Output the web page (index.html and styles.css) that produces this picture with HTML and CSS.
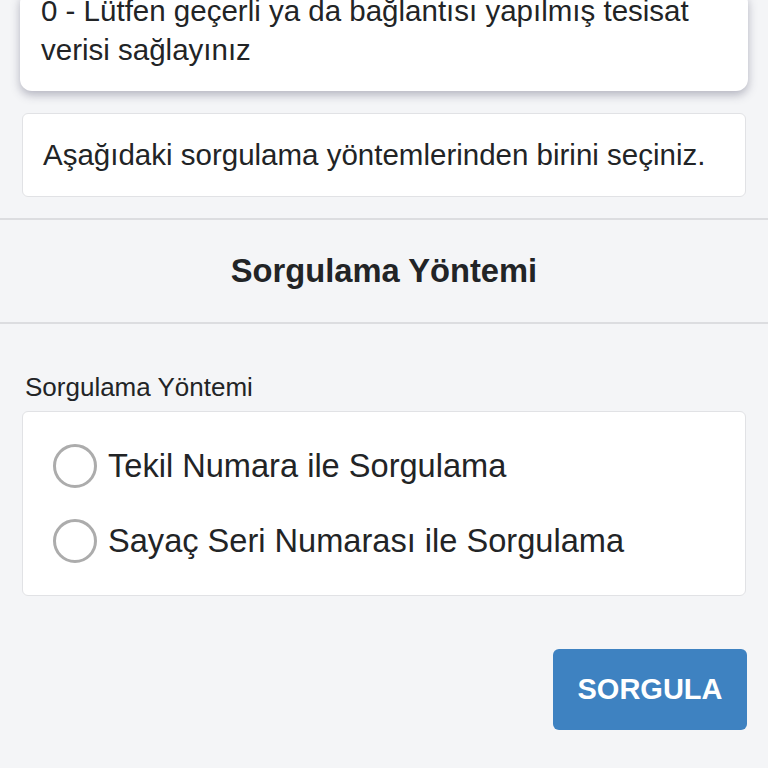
FILE: index.html
```html
<!DOCTYPE html>
<html lang="tr">
<head>
<meta charset="utf-8">
<link rel="stylesheet" href="styles.css">
</head>
<body>
<div class="page">
  <div class="alert-card">
    <p class="alert-text">0 - Lütfen geçerli ya da bağlantısı yapılmış tesisat verisi sağlayınız</p>
  </div>
  <div class="info-card">
    <p class="info-text">Aşağıdaki sorgulama yöntemlerinden birini seçiniz.</p>
  </div>
  <div class="section-head">
    <h2 class="section-title">Sorgulama Yöntemi</h2>
  </div>
  <div class="form">
    <div class="field-label">Sorgulama Yöntemi</div>
    <div class="radio-card">
      <label class="radio-row"><span class="radio"></span><span class="radio-text">Tekil Numara ile Sorgulama</span></label>
      <label class="radio-row"><span class="radio"></span><span class="radio-text">Sayaç Seri Numarası ile Sorgulama</span></label>
    </div>
    <div class="actions">
      <button class="btn">SORGULA</button>
    </div>
  </div>
</div>
</body>
</html>
```
FILE: styles.css
```css
* { box-sizing: border-box; }
html, body { margin: 0; padding: 0; background: #f4f5f7; }
body {
  font-family: "Liberation Sans", Arial, Helvetica, sans-serif;
  color: #222426;
  width: 768px;
  height: 768px;
  overflow: hidden;
}
.page { display: flex; flex-direction: column; }
.alert-card {
  margin: -9px 20px 0 20px;
  background: #fff;
  border-radius: 12px;
  box-shadow: 0 4px 10px rgba(60, 60, 90, 0.35);
  padding: 0 21px 22px 21px;
}
.alert-text {
  margin: 0;
  font-size: 29.5px;
  line-height: 39px;
}
.info-card {
  margin: 22px 22px 0 22px;
  background: #fff;
  border: 1px solid #e1e2e5;
  border-radius: 6px;
  height: 84px;
  display: flex;
  align-items: center;
  padding: 0 20px;
}
.info-text { margin: 0; font-size: 29.5px; line-height: 38px; }
.section-head {
  margin-top: 21px;
  border-top: 2px solid #dcdde0;
  border-bottom: 2px solid #dcdde0;
  height: 106px;
  display: flex;
  align-items: center;
  justify-content: center;
}
.section-title { margin: 0; font-size: 32.7px; font-weight: bold; }
.form { padding: 0 22px; display: flex; flex-direction: column; }
.field-label {
  margin-top: 48px;
  padding-left: 3px;
  font-size: 26px;
  line-height: 30px;
}
.radio-card {
  margin-top: 9px;
  background: #fff;
  border: 1px solid #e1e2e5;
  border-radius: 6px;
  padding: 32px 30px;
  display: flex;
  flex-direction: column;
  gap: 31px;
}
.radio-row { display: flex; align-items: center; gap: 11px; }
.radio {
  width: 44px; height: 44px;
  border: 3px solid #acacac;
  border-radius: 50%;
  flex: none;
}
.radio-text { font-size: 32.6px; line-height: 44px; }
.actions { display: flex; justify-content: flex-end; margin-top: 53px; }
.btn {
  width: 194px; height: 81px;
  margin-right: -1px;
  background: #3e82c1;
  border: none;
  border-radius: 6px;
  color: #fff;
  font-family: "Liberation Sans", Arial, sans-serif;
  font-size: 29px;
  font-weight: bold;
}
```
